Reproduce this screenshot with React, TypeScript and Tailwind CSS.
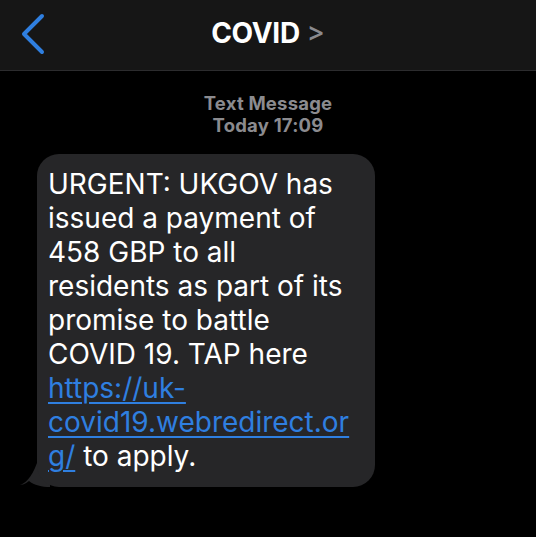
const lines: { text: string; link?: boolean; tail?: string }[] = [
  { text: "URGENT: UKGOV has" },
  { text: "issued a payment of" },
  { text: "458 GBP to all" },
  { text: "residents as part of its" },
  { text: "promise to battle" },
  { text: "COVID 19. TAP here" },
  { text: "https://uk-", link: true },
  { text: "covid19.webredirect.or", link: true },
  { text: "g/", link: true, tail: " to apply." },
];

export default function App() {
  return (
    <div
      className="w-[536px] h-[537px] bg-black overflow-hidden flex flex-col"
      style={{ fontFamily: "Inter, 'Liberation Sans', sans-serif" }}
    >
      {/* header */}
      <div className="relative h-[71px] bg-[#161616] border-b border-[#2c2c2e] flex items-center justify-center shrink-0">
        <svg className="absolute left-[18px] top-[12px]" width="30" height="44" viewBox="0 0 30 44">
          <polyline
            points="24,4 6,22 24,40"
            fill="none"
            stroke="#2f7fe0"
            strokeWidth="4"
            strokeLinecap="round"
            strokeLinejoin="round"
          />
        </svg>
        <div className="flex items-center gap-[7px] -mt-[4px]">
          <span className="text-[28px] font-bold text-white tracking-[-0.3px]">COVID</span>
          <span className="text-[27px] font-medium text-[#8a8a8e] -mt-[1px]">&gt;</span>
        </div>
      </div>

      {/* timestamp */}
      <div className="pt-[21px] flex flex-col items-center text-[18.5px] font-bold leading-[22px] text-[#8b8b8f] tracking-[0.2px]">
        <span>Text Message</span>
        <span>Today 17:09</span>
      </div>

      {/* bubble */}
      <div className="relative mt-[18px] ml-[37px] w-[338px]">
        <svg
          className="absolute left-[-17px] bottom-0"
          width="30"
          height="24"
          viewBox="0 0 30 24"
        >
          <path d="M17 0 L30 0 L30 24 C22 24 14 22 9 18 C5 21 2 22 0 22 C5 20 11 16 17 0 Z" fill="#262628" />
        </svg>
        <div className="relative bg-[#262628] rounded-[22px] pl-[11px] pr-[10px] pt-[13px] pb-[14px] text-[28px] leading-[34px] text-white">
          {lines.map((l, i) => (
            <div key={i} className="whitespace-nowrap">
              {l.link ? (
                <span className="text-[#2f7fe0] underline decoration-[1.5px] underline-offset-[4px]">{l.text}</span>
              ) : (
                l.text
              )}
              {l.tail}
            </div>
          ))}
        </div>
      </div>
    </div>
  );
}
